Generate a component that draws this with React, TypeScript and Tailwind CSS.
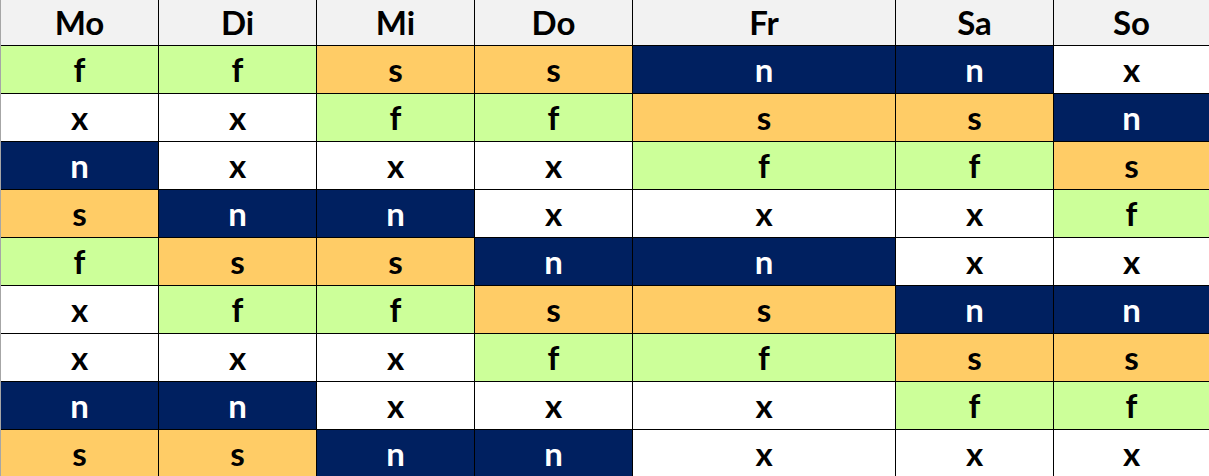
import React from "react";

const days = ["Mo", "Di", "Mi", "Do", "Fr", "Sa", "So"];
const rows = [
  "ffssnnx",
  "xxffssn",
  "nxxxffs",
  "snnxxxf",
  "fssnnxx",
  "xffssnn",
  "xxxffss",
  "nnxxxff",
  "ssnnxxx",
];

const cellClass: Record<string, string> = {
  f: "bg-[#ccff99] text-black",
  s: "bg-[#ffcc66] text-black",
  n: "bg-[#002060] text-white",
  x: "bg-white text-black",
};

export default function App() {
  return (
    <div className="w-[1209px] h-[476px] overflow-hidden bg-white">
      <div
        className="grid grid-cols-[157px_157px_157px_157px_262px_157px_155px] grid-rows-[45px_repeat(9,47px)] gap-px bg-black border-l border-[#a6a6a6] w-[1209px] text-[33px] font-bold leading-none"
        style={{ fontFamily: "Lato, 'Open Sans', sans-serif" }}
      >
        {days.map((d) => (
          <div key={d} className="bg-[#f2f2f2] text-black flex items-center justify-center">
            {d}
          </div>
        ))}
        {rows.map((r, i) =>
          r.split("").map((c, j) => (
            <div key={`${i}-${j}`} className={`${cellClass[c]} flex items-center justify-center`}>
              {c}
            </div>
          ))
        )}
      </div>
    </div>
  );
}
